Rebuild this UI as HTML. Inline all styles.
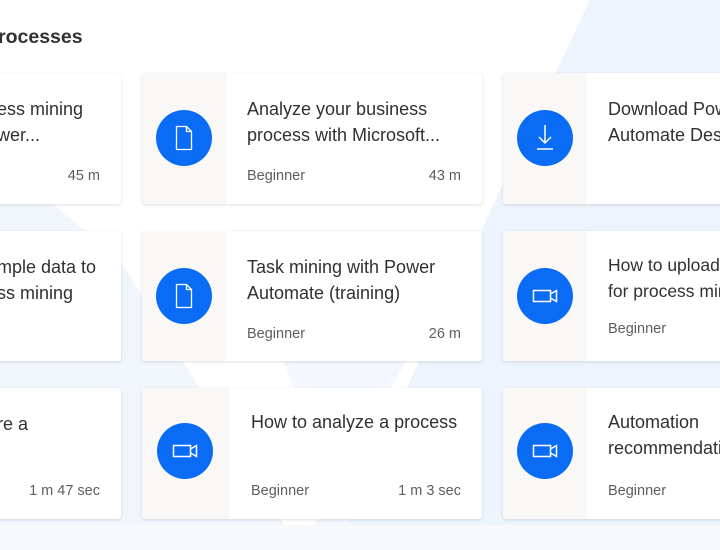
<!DOCTYPE html><html><head><style>
body{margin:0;width:720px;height:550px;overflow:hidden;position:relative;font-family:"Liberation Sans",sans-serif;background:#fff}
.bg{position:absolute;left:0;top:0}
h2{position:absolute;left:-2px;top:26px;margin:0;font-size:19.5px;font-weight:bold;color:#323130}
.c{position:absolute;width:340px;height:131px;background:#fff;border-radius:3px;box-shadow:0 1px 3px rgba(0,0,0,.13);overflow:hidden}
.ip{position:absolute;left:0;top:0;bottom:0;width:84px;background:#f9f8f7}
.ci{position:absolute;left:14px;top:37px;width:56px;height:56px;border-radius:50%;background:#0a6cf5}
.ci svg{position:absolute;left:0;top:0}
.t{position:absolute;left:105px;top:23px;width:240px;font-size:18px;line-height:26px;color:#323130;white-space:nowrap}
.m{position:absolute;left:105px;right:21px;top:95px;font-size:14.5px;color:#605e5c;display:flex;justify-content:space-between}
.L .t{left:216px}
</style></head><body>
<svg class="bg" width="720" height="550"><rect width="720" height="550" fill="#fff"/>
<polygon points="590,0 720,0 720,550 330,550" fill="#eef4fd"/>
<polygon points="0,160 0,550 300,550 120,260" fill="#f1f6fd"/>
<polygon points="230,230 480,230 300,550 360,550" fill="#f4f8fe"/>
<rect y="525" width="720" height="25" fill="#f7f9fd"/></svg>
<h2>rocesses</h2>
<svg width="0" height="0" style="position:absolute"><defs>
<g id="doc"><path d="M20.5 16.5h10l5 5v18h-15z M30.5 16.5v5h5" fill="none" stroke="#fff" stroke-width="1.3"/></g>
<g id="dl"><path d="M28 15v18 M22 27l6 6 6-6 M20 39h16" fill="none" stroke="#fff" stroke-width="1.5"/></g>
<g id="vid"><path d="M16.5 22.5h17v11h-17z M33.5 26l6-3.5v11l-6-3.5" fill="none" stroke="#fff" stroke-width="1.5"/></g></defs></svg>

<div class="c L" style="left:-219px;top:73px"><div class="t">ess mining<br>wer...</div><div class="m"><span></span><span>45 m</span></div></div>
<div class="c" style="left:142px;top:73px"><div class="ip"><div class="ci"><svg width="56" height="56"><use href="#doc"/></svg></div></div><div class="t">Analyze your business<br>process with Microsoft...</div><div class="m"><span>Beginner</span><span>43 m</span></div></div>
<div class="c" style="left:503px;top:73px"><div class="ip"><div class="ci"><svg width="56" height="56"><use href="#dl"/></svg></div></div><div class="t">Download Power<br>Automate Desktop</div></div>

<div class="c L" style="left:-219px;top:231px;height:130px"><div class="t">mple data to<br>ss mining</div></div>
<div class="c" style="left:142px;top:231px;height:130px"><div class="ip"><div class="ci"><svg width="56" height="56"><use href="#doc"/></svg></div></div><div class="t">Task mining with Power<br>Automate (training)</div><div class="m"><span>Beginner</span><span>26 m</span></div></div>
<div class="c" style="left:503px;top:231px;height:130px"><div class="ip"><div class="ci"><svg width="56" height="56"><use href="#vid"/></svg></div></div><div class="t" style="top:21px;font-size:17.5px">How to upload data<br>for process mining</div><div class="m" style="top:90px"><span>Beginner</span></div></div>

<div class="c L" style="left:-219px;top:388px"><div class="t">re a</div><div class="m"><span></span><span>1 m 47 sec</span></div></div>
<div class="c" style="left:142px;top:388px"><div class="ip" style="width:88px"><div class="ci" style="left:15px;top:35px"><svg width="56" height="56"><use href="#vid"/></svg></div></div><div class="t" style="left:109px;top:21px">How to analyze a process</div><div class="m" style="left:109px"><span>Beginner</span><span>1 m 3 sec</span></div></div>
<div class="c" style="left:503px;top:388px"><div class="ip"><div class="ci" style="top:35px"><svg width="56" height="56"><use href="#vid"/></svg></div></div><div class="t" style="top:21px">Automation<br>recommendations</div><div class="m"><span>Beginner</span></div></div>
</body></html>
